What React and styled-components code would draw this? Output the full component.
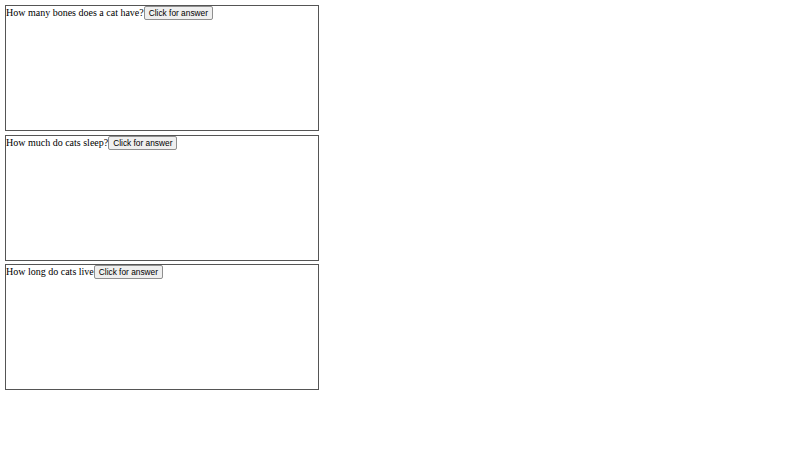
import React from 'react';
import styled, { createGlobalStyle } from 'styled-components';

const GlobalStyle = createGlobalStyle`
  body {
    margin: 5px;
    font-family: "Liberation Serif", "Times New Roman", serif;
    font-size: 10px;
    color: #000000;
    background: #ffffff;
  }
`;

const FaqList = styled.div`
  display: flex;
  flex-direction: column;
  gap: 3.5px;
`;

const FaqCard = styled.div`
  box-sizing: border-box;
  width: 314px;
  height: 126px;
  border: 1px solid #555555;
`;

const Question = styled.span`
  font-family: "Liberation Serif", "Times New Roman", serif;
  font-size: 10px;
`;

const AnswerButton = styled.button`
  font-family: "Liberation Sans", Arial, sans-serif;
  font-size: 8.33px;
  padding: 1px 4px;
  margin: 0;
  color: #000000;
  background: #efefef;
  border: 1px solid #8f8f8f;
  border-radius: 2px;
`;

const questions = [
  'How many bones does a cat have?',
  'How much do cats sleep?',
  'How long do cats live',
];

function App() {
  return (
    <>
      <GlobalStyle />
      <FaqList>
        {questions.map((q) => (
          <FaqCard key={q}>
            <Question>{q}</Question>
            <AnswerButton>Click for answer</AnswerButton>
          </FaqCard>
        ))}
      </FaqList>
    </>
  );
}

export default App;
